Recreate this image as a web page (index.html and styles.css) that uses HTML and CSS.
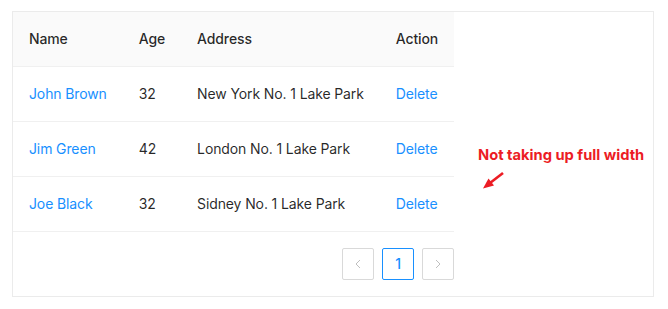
FILE: index.html
```html
<!DOCTYPE html>
<html lang="en">
<head>
    <meta charset="UTF-8">
    <meta name="viewport" content="width=device-width, initial-scale=1.0">
    <title>Table width</title>
    <link rel="stylesheet" href="styles.css">
</head>
<body>
    <div class="frame">
        <div class="table-wrap">
            <table class="table">
                <thead>
                    <tr>
                        <th>Name</th>
                        <th>Age</th>
                        <th>Address</th>
                        <th>Action</th>
                    </tr>
                </thead>
                <tbody>
                    <tr>
                        <td><a href="#">John Brown</a></td>
                        <td>32</td>
                        <td>New York No. 1 Lake Park</td>
                        <td><a href="#">Delete</a></td>
                    </tr>
                    <tr>
                        <td><a href="#">Jim Green</a></td>
                        <td>42</td>
                        <td>London No. 1 Lake Park</td>
                        <td><a href="#">Delete</a></td>
                    </tr>
                    <tr>
                        <td><a href="#">Joe Black</a></td>
                        <td>32</td>
                        <td>Sidney No. 1 Lake Park</td>
                        <td><a href="#">Delete</a></td>
                    </tr>
                </tbody>
            </table>
            <ul class="pagination">
                <li class="page-item disabled">
                    <svg width="14" height="14" viewBox="0 0 14 14"><path d="M9 3 5 7l4 4" fill="none" stroke="currentColor" stroke-width="1"/></svg>
                </li>
                <li class="page-item active">1</li>
                <li class="page-item disabled">
                    <svg width="14" height="14" viewBox="0 0 14 14"><path d="M5 3l4 4-4 4" fill="none" stroke="currentColor" stroke-width="1"/></svg>
                </li>
            </ul>
        </div>

        <div class="note">
            <span class="note-text">Not taking up full width</span>
            <svg class="note-arrow" width="24" height="20" viewBox="0 0 24 20">
                <path d="M22 2 9 12" stroke="#ec1c24" stroke-width="2.6" fill="none"/>
                <path d="M2 17.5 7.5 7.5 13 14.5Z" fill="#ec1c24"/>
            </svg>
        </div>
    </div>
</body>
</html>
```

FILE: styles.css
```css
body {
    margin: 0;
    padding: 11px 14px 0 12px;
    font-family: Inter, "Noto Sans", Arial, sans-serif;
    font-size: 14px;
    color: rgba(0, 0, 0, 0.85);
    background: #fff;
}
.frame {
    position: relative;
    height: 286px;
    box-sizing: border-box;
    border: 1px solid #ebebeb;
}
.table-wrap {
    display: inline-block;
    vertical-align: top;
}
.table {
    border-collapse: collapse;
    border-spacing: 0;
}
.table th,
.table td {
    padding: 16px;
    line-height: 22px;
    text-align: left;
    white-space: nowrap;
    letter-spacing: -0.12px;
    border-bottom: 1px solid #f0f0f0;
}
.table th {
    background: #fafafa;
    font-weight: 500;
}
.table a {
    color: #1890ff;
    text-decoration: none;
}
.pagination {
    display: flex;
    justify-content: flex-end;
    gap: 8px;
    list-style: none;
    margin: 16px 0;
    padding: 0;
}
.page-item {
    display: flex;
    align-items: center;
    justify-content: center;
    width: 32px;
    height: 32px;
    box-sizing: border-box;
    border: 1px solid #d9d9d9;
    border-radius: 2px;
    line-height: 30px;
}
.page-item.disabled {
    color: rgba(0, 0, 0, 0.25);
}
.page-item.active {
    border-color: #1890ff;
    color: #1890ff;
    font-weight: 500;
}
.note {
    position: absolute;
    left: 465px;
    top: 133px;
}
.note-text {
    display: block;
    color: #ec1c24;
    font-weight: 700;
    font-size: 14.7px;
    line-height: 20px;
}
.note-arrow {
    display: block;
    margin: 6px 0 0 3px;
}
```
